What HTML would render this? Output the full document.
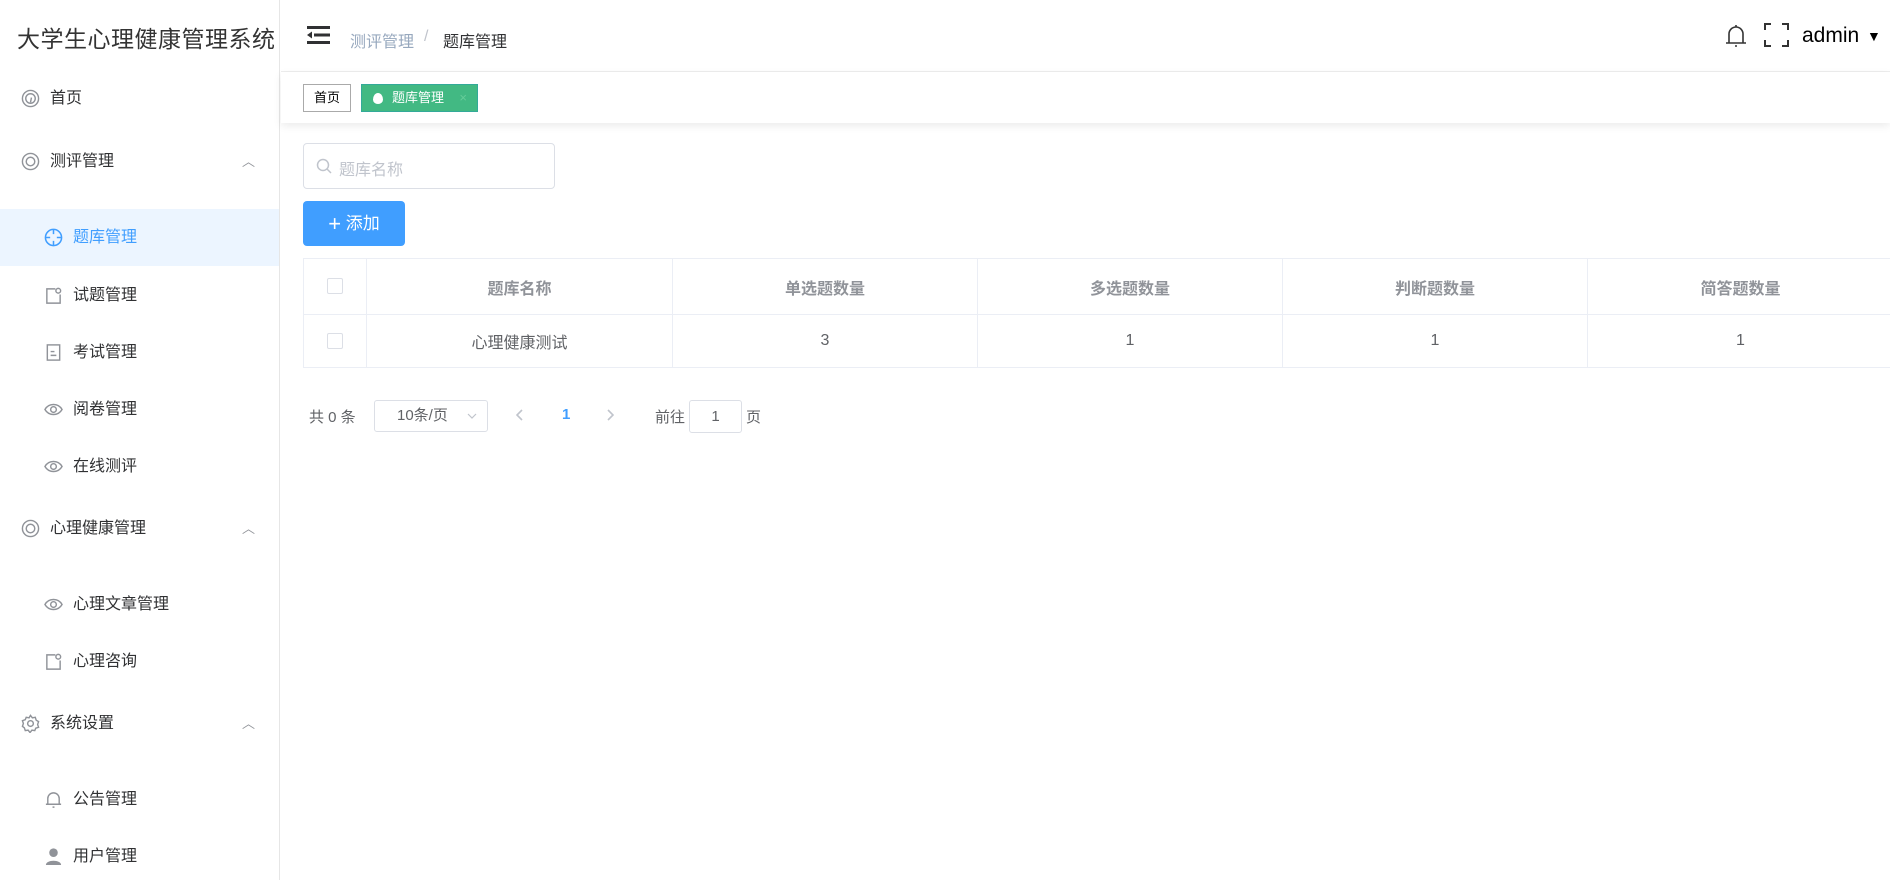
<!DOCTYPE html>
<html><head><meta charset="utf-8"><style>
*{box-sizing:border-box;margin:0;padding:0}
body{width:1890px;height:880px;overflow:hidden;background:#fff;font-family:"Liberation Sans","Noto Sans CJK SC",sans-serif;color:#303133;position:relative}
.side{position:absolute;left:0;top:0;width:280px;height:880px;border-right:1px solid #e6e6e6;background:#fff}
.title{position:absolute;left:17px;top:20px;font-size:23px;color:#333;white-space:nowrap;letter-spacing:.5px}
.mi{position:absolute;left:0;width:279px;height:57px;line-height:57px;font-size:16px;color:#303133}
.mi svg{position:absolute;top:19px;width:19px;height:19px}
.mi span{position:absolute}
.arr{position:absolute;right:24px;top:0;font-size:13px;color:#909399}
.act{background:#ecf5ff;color:#409eff}
.hdr{position:absolute;left:281px;top:0;right:0;height:72px;border-bottom:1px solid #eee}
.tags{position:absolute;left:281px;top:72px;right:0;height:51px;box-shadow:0 3px 8px rgba(0,0,0,.08)}
th,td{border-right:1px solid #ebeef5;border-bottom:1px solid #ebeef5;text-align:center;font-size:16px}
th{height:56px;color:#909399;font-weight:600}
td{height:53px;color:#606266}
table{position:absolute;left:303px;top:258px;border-collapse:collapse;border-top:1px solid #ebeef5;border-left:1px solid #ebeef5;table-layout:fixed;width:1590px}
.cb{display:inline-block;width:16px;height:16px;border:1px solid #dcdfe6;border-radius:2px;vertical-align:middle}
</style></head><body>
<div class="side">
<div class="title">大学生心理健康管理系统</div>
<div class="mi" style="top:70px"><svg style="left:21px" viewBox="0 0 20 20" fill="none" stroke="#909399" stroke-width="1.5"><circle cx="10" cy="10" r="8.5"/><circle cx="10" cy="10" r="5"/><path d="M10 14l1-5"/></svg><span style="left:50px">首页</span></div>
<div class="mi" style="top:133px"><svg style="left:21px" viewBox="0 0 20 20" fill="none" stroke="#909399" stroke-width="1.5"><circle cx="10" cy="10" r="8.5"/><circle cx="10" cy="10" r="4.5"/></svg><span style="left:50px">测评管理</span><span class="arr">︿</span></div>
<div class="mi act" style="top:209px"><svg style="left:44px" viewBox="0 0 20 20" fill="none" stroke="#409eff" stroke-width="1.6"><circle cx="10" cy="10" r="8.5"/><path d="M10 1.5v5M10 13.5v5M1.5 10h5M13.5 10h5"/></svg><span style="left:73px">题库管理</span></div>
<div class="mi" style="top:267px"><svg style="left:44px" viewBox="0 0 20 20" fill="none" stroke="#909399" stroke-width="1.5"><path d="M12 3H3v15h14V9"/><circle cx="15" cy="5" r="2.5"/></svg><span style="left:73px">试题管理</span></div>
<div class="mi" style="top:324px"><svg style="left:44px" viewBox="0 0 20 20" fill="none" stroke="#909399" stroke-width="1.5"><rect x="3.5" y="2" width="13" height="16"/><path d="M7 9h4M7 13h6"/></svg><span style="left:73px">考试管理</span></div>
<div class="mi" style="top:381px"><svg style="left:44px" viewBox="0 0 20 20" fill="none" stroke="#909399" stroke-width="1.5"><path d="M1 10c4-7 14-7 18 0c-4 7-14 7-18 0z"/><circle cx="10" cy="10" r="3"/></svg><span style="left:73px">阅卷管理</span></div>
<div class="mi" style="top:438px"><svg style="left:44px" viewBox="0 0 20 20" fill="none" stroke="#909399" stroke-width="1.5"><path d="M1 10c4-7 14-7 18 0c-4 7-14 7-18 0z"/><circle cx="10" cy="10" r="3"/></svg><span style="left:73px">在线测评</span></div>
<div class="mi" style="top:500px"><svg style="left:21px" viewBox="0 0 20 20" fill="none" stroke="#909399" stroke-width="1.5"><circle cx="10" cy="10" r="8.5"/><circle cx="10" cy="10" r="4.5"/></svg><span style="left:50px">心理健康管理</span><span class="arr">︿</span></div>
<div class="mi" style="top:576px"><svg style="left:44px" viewBox="0 0 20 20" fill="none" stroke="#909399" stroke-width="1.5"><path d="M1 10c4-7 14-7 18 0c-4 7-14 7-18 0z"/><circle cx="10" cy="10" r="3"/></svg><span style="left:73px">心理文章管理</span></div>
<div class="mi" style="top:633px"><svg style="left:44px" viewBox="0 0 20 20" fill="none" stroke="#909399" stroke-width="1.5"><path d="M12 3H3v15h14V9"/><circle cx="15" cy="5" r="2.5"/></svg><span style="left:73px">心理咨询</span></div>
<div class="mi" style="top:695px"><svg style="left:21px" viewBox="0 0 20 20" fill="none" stroke="#909399" stroke-width="1.5"><circle cx="10" cy="10" r="3"/><path d="M10 1.5l2 2.5 3-.5 1 3 2.5 1.5-1 3 1 3-3 1-1 2.5-3-.5-2 2.5-2-2.5-3 .5-1-3L1.5 13l1-3-1-3 3-1 1-2.5 3 .5z"/></svg><span style="left:50px">系统设置</span><span class="arr">︿</span></div>
<div class="mi" style="top:771px"><svg style="left:44px" viewBox="0 0 20 20" fill="none" stroke="#909399" stroke-width="1.5"><path d="M4 15V9a6 6 0 0112 0v6M2 15h16M9 18h2"/></svg><span style="left:73px">公告管理</span></div>
<div class="mi" style="top:828px"><svg style="left:44px" viewBox="0 0 20 20" fill="#909399"><circle cx="10" cy="6" r="4.5"/><path d="M2 19c0-6 16-6 16 0z"/></svg><span style="left:73px">用户管理</span></div>
</div>
<div class="hdr">
<svg style="position:absolute;left:26px;top:26px" width="23" height="18" viewBox="0 0 23 18"><rect x="0" y="0" width="23" height="3" fill="#303133"/><rect x="7" y="7.5" width="16" height="3" fill="#303133"/><rect x="0" y="15" width="23" height="3" fill="#303133"/><path d="M0 9l5-3.5v7z" fill="#303133"/></svg>
<span style="position:absolute;left:69px;top:28px;font-size:16px;color:#97a8be">测评管理</span>
<span style="position:absolute;left:143px;top:28px;font-size:16px;color:#c0c4cc">/</span>
<span style="position:absolute;left:162px;top:28px;font-size:16px;color:#303133">题库管理</span>
<svg style="position:absolute;left:1442px;top:22px" width="26" height="26" viewBox="0 0 26 26" fill="none" stroke="#333" stroke-width="1.6"><path d="M6 21V12a7 7 0 0114 0v9M3 21h20M13 3v2M12 24h2"/></svg>
<svg style="position:absolute;left:1483px;top:23px" width="25" height="24" viewBox="0 0 25 24" fill="none" stroke="#333" stroke-width="2"><path d="M1 7V1h6M18 1h6v6M24 17v6h-6M7 23H1v-6"/></svg>
<span style="position:absolute;left:1521px;top:24px;font-size:21px;color:#000">admin</span>
<span style="position:absolute;left:1586px;top:28px;font-size:14px;color:#000">▼</span>
</div>
<div class="tags">
<div style="position:absolute;left:22px;top:12px;width:48px;height:28px;border:1px solid #aaa;font-size:13px;line-height:26px;text-align:center;color:#000">首页</div>
<div style="position:absolute;left:80px;top:12px;width:117px;height:28px;background:#42b983;border:1px solid #3a9;font-size:13px;line-height:26px;color:#fff;padding-left:30px">题库管理<span style="position:absolute;left:11px;top:8px;width:10px;height:11px;background:#fff;border-radius:50% 50% 50% 50%/60% 60% 40% 40%"></span><span style="position:absolute;right:10px;top:0;color:#6c9">×</span></div>
</div>
<div style="position:absolute;left:303px;top:143px;width:252px;height:46px;border:1px solid #dcdfe6;border-radius:4px">
<svg style="position:absolute;left:12px;top:14px" width="16" height="16" viewBox="0 0 16 16" fill="none" stroke="#c0c4cc" stroke-width="1.5"><circle cx="7" cy="7" r="5.5"/><path d="M11 11l4 4"/></svg>
<span style="position:absolute;left:35px;top:12px;font-size:16px;color:#c0c4cc">题库名称</span></div>
<div style="position:absolute;left:303px;top:201px;width:102px;height:45px;background:#409eff;border-radius:4px;color:#fff;font-size:17px;line-height:45px;text-align:center"><span style="font-size:22px;vertical-align:-2px">+</span> 添加</div>
<table>
<colgroup><col style="width:63px"><col style="width:306px"><col style="width:305px"><col style="width:305px"><col style="width:305px"><col style="width:306px"></colgroup>
<tr><th><span class="cb"></span></th><th>题库名称</th><th>单选题数量</th><th>多选题数量</th><th>判断题数量</th><th>简答题数量</th></tr>
<tr><td><span class="cb"></span></td><td>心理健康测试</td><td>3</td><td>1</td><td>1</td><td>1</td></tr>
</table>
<div style="position:absolute;top:406px;left:0;font-size:15px;color:#606266">
<span style="position:absolute;left:309px;top:0;white-space:nowrap">共 0 条</span>
<div style="position:absolute;left:374px;top:-6px;width:114px;height:32px;border:1px solid #dcdfe6;border-radius:3px;line-height:30px;padding-left:22px;white-space:nowrap">10条/页<svg style="position:absolute;right:10px;top:12px" width="10" height="6" viewBox="0 0 10 6" fill="none" stroke="#c0c4cc" stroke-width="1.2"><path d="M1 1l4 4 4-4"/></svg></div>
<svg style="position:absolute;left:516px;top:3px" width="7" height="12" viewBox="0 0 7 12" fill="none" stroke="#c0c4cc" stroke-width="1.6"><path d="M6 1L1 6l5 5"/></svg>
<span style="position:absolute;left:562px;top:0;color:#409eff;font-weight:bold">1</span>
<svg style="position:absolute;left:607px;top:3px" width="7" height="12" viewBox="0 0 7 12" fill="none" stroke="#c0c4cc" stroke-width="1.6"><path d="M1 1l5 5-5 5"/></svg>
<span style="position:absolute;left:655px;top:0;white-space:nowrap">前往</span>
<div style="position:absolute;left:689px;top:-6px;width:53px;height:33px;border:1px solid #dcdfe6;border-radius:3px;text-align:center;line-height:31px">1</div>
<span style="position:absolute;left:746px;top:0">页</span>
</div>
</body></html>
